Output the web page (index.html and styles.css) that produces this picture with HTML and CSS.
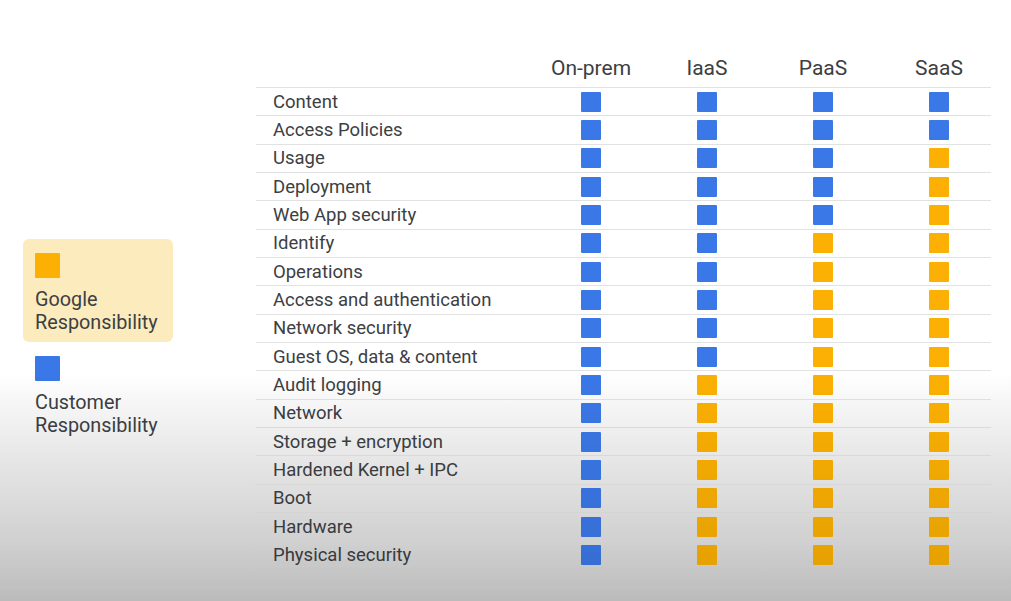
FILE: index.html
```html
<!DOCTYPE html>
<html>
<head>
<meta charset="utf-8">
<link rel="stylesheet" href="styles.css">
</head>
<body>
<div class="page">
  <aside class="legend">
    <div class="legend-item google">
      <span class="sq orange big"></span>
      <div class="legend-text">Google<br>Responsibility</div>
    </div>
    <div class="legend-item customer">
      <span class="sq blue big"></span>
      <div class="legend-text">Customer<br>Responsibility</div>
    </div>
  </aside>
  <section class="table">
    <div class="row head">
      <div></div><div class="col">On-prem</div><div class="col">IaaS</div><div class="col">PaaS</div><div class="col">SaaS</div>
    </div>
    <div class="row"><div class="label">Content</div><div class="col"><span class="sq blue"></span></div><div class="col"><span class="sq blue"></span></div><div class="col"><span class="sq blue"></span></div><div class="col"><span class="sq blue"></span></div></div>
    <div class="row"><div class="label">Access Policies</div><div class="col"><span class="sq blue"></span></div><div class="col"><span class="sq blue"></span></div><div class="col"><span class="sq blue"></span></div><div class="col"><span class="sq blue"></span></div></div>
    <div class="row"><div class="label">Usage</div><div class="col"><span class="sq blue"></span></div><div class="col"><span class="sq blue"></span></div><div class="col"><span class="sq blue"></span></div><div class="col"><span class="sq orange"></span></div></div>
    <div class="row"><div class="label">Deployment</div><div class="col"><span class="sq blue"></span></div><div class="col"><span class="sq blue"></span></div><div class="col"><span class="sq blue"></span></div><div class="col"><span class="sq orange"></span></div></div>
    <div class="row"><div class="label">Web App security</div><div class="col"><span class="sq blue"></span></div><div class="col"><span class="sq blue"></span></div><div class="col"><span class="sq blue"></span></div><div class="col"><span class="sq orange"></span></div></div>
    <div class="row"><div class="label">Identify</div><div class="col"><span class="sq blue"></span></div><div class="col"><span class="sq blue"></span></div><div class="col"><span class="sq orange"></span></div><div class="col"><span class="sq orange"></span></div></div>
    <div class="row"><div class="label">Operations</div><div class="col"><span class="sq blue"></span></div><div class="col"><span class="sq blue"></span></div><div class="col"><span class="sq orange"></span></div><div class="col"><span class="sq orange"></span></div></div>
    <div class="row"><div class="label">Access and authentication</div><div class="col"><span class="sq blue"></span></div><div class="col"><span class="sq blue"></span></div><div class="col"><span class="sq orange"></span></div><div class="col"><span class="sq orange"></span></div></div>
    <div class="row"><div class="label">Network security</div><div class="col"><span class="sq blue"></span></div><div class="col"><span class="sq blue"></span></div><div class="col"><span class="sq orange"></span></div><div class="col"><span class="sq orange"></span></div></div>
    <div class="row"><div class="label">Guest OS, data &amp; content</div><div class="col"><span class="sq blue"></span></div><div class="col"><span class="sq blue"></span></div><div class="col"><span class="sq orange"></span></div><div class="col"><span class="sq orange"></span></div></div>
    <div class="row"><div class="label">Audit logging</div><div class="col"><span class="sq blue"></span></div><div class="col"><span class="sq orange"></span></div><div class="col"><span class="sq orange"></span></div><div class="col"><span class="sq orange"></span></div></div>
    <div class="row"><div class="label">Network</div><div class="col"><span class="sq blue"></span></div><div class="col"><span class="sq orange"></span></div><div class="col"><span class="sq orange"></span></div><div class="col"><span class="sq orange"></span></div></div>
    <div class="row"><div class="label">Storage + encryption</div><div class="col"><span class="sq blue"></span></div><div class="col"><span class="sq orange"></span></div><div class="col"><span class="sq orange"></span></div><div class="col"><span class="sq orange"></span></div></div>
    <div class="row"><div class="label">Hardened Kernel + IPC</div><div class="col"><span class="sq blue"></span></div><div class="col"><span class="sq orange"></span></div><div class="col"><span class="sq orange"></span></div><div class="col"><span class="sq orange"></span></div></div>
    <div class="row"><div class="label">Boot</div><div class="col"><span class="sq blue"></span></div><div class="col"><span class="sq orange"></span></div><div class="col"><span class="sq orange"></span></div><div class="col"><span class="sq orange"></span></div></div>
    <div class="row"><div class="label">Hardware</div><div class="col"><span class="sq blue"></span></div><div class="col"><span class="sq orange"></span></div><div class="col"><span class="sq orange"></span></div><div class="col"><span class="sq orange"></span></div></div>
    <div class="row"><div class="label">Physical security</div><div class="col"><span class="sq blue"></span></div><div class="col"><span class="sq orange"></span></div><div class="col"><span class="sq orange"></span></div><div class="col"><span class="sq orange"></span></div></div>
  </section>
</div>
</body>
</html>
```
FILE: styles.css
```css
html, body {
  margin: 0;
  height: 100%;
}
body {
  background: linear-gradient(to bottom,
    #ffffff 0%,
    #ffffff 62%,
    #f4f4f4 73%,
    #e1e1e1 90%,
    #d1d1d1 100%);
  font-family: Roboto, "Liberation Sans", sans-serif;
  color: #3c4043;
  overflow: hidden;
}
body::after {
  content: "";
  position: fixed;
  inset: 0;
  pointer-events: none;
  background: linear-gradient(to bottom,
    rgba(0,0,0,0) 0%,
    rgba(0,0,0,0) 62%,
    rgba(0,0,0,0.03) 73%,
    rgba(0,0,0,0.07) 90%,
    rgba(0,0,0,0.10) 100%);
}
.page {
  display: flex;
  align-items: flex-start;
}
.legend {
  margin-left: 23px;
  margin-top: 239px;
  width: 150px;
  display: flex;
  flex-direction: column;
  gap: 14px;
}
.legend-item {
  padding: 14px 12px 8px;
  border-radius: 6px;
}
.legend-item.google {
  background: #fcebbd;
}
.legend-item.customer {
  padding-top: 0;
}
.legend-text {
  margin-top: 10px;
  font-size: 19.8px;
  line-height: 23px;
  color: #3c4043;
  white-space: nowrap;
}
.sq {
  display: block;
  width: 20px;
  height: 20px;
  border-radius: 1px;
}
.sq.big {
  width: 25px;
  height: 25px;
}
.sq.blue { background: #3b78e7; }
.sq.orange { background: #fbb003; }
.table {
  margin-left: 83px;
  padding-top: 50px;
  width: 735px;
}
.row {
  display: grid;
  grid-template-columns: 277px repeat(4, 116px);
  align-items: center;
  height: 28.33px;
  box-sizing: border-box;
  border-top: 1px solid #e2e2e2;
}
.row.head {
  height: 37px;
  border-top: none;
  font-size: 21px;
  padding-bottom: 2px;
}
.label {
  padding-left: 17px;
  font-size: 18.5px;
  white-space: nowrap;
}
.col {
  display: flex;
  justify-content: center;
}
```
